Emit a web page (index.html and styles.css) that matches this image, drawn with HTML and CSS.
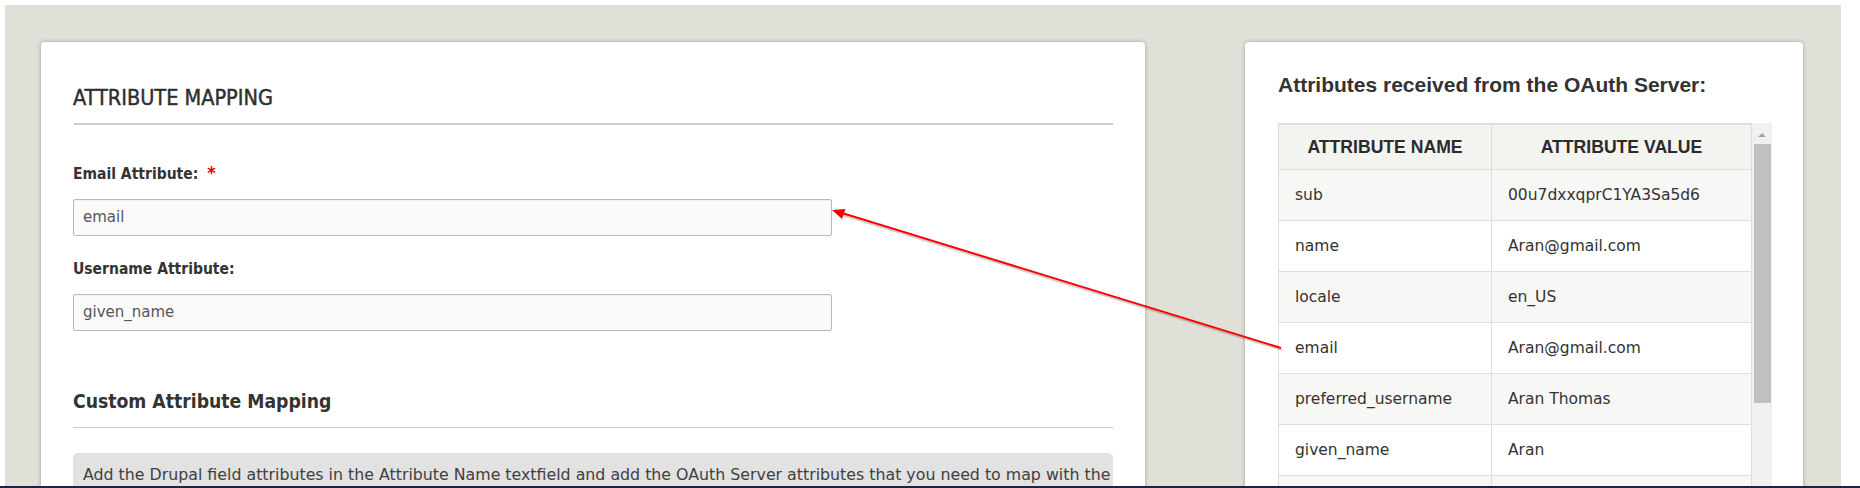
FILE: index.html
```html
<!DOCTYPE html>
<html lang="en">
<head>
<meta charset="utf-8">
<title>Attribute Mapping</title>
<link rel="stylesheet" href="styles.css">
</head>
<body>
<div class="page">
  <div class="bg">
    <section class="card card-left">
      <h2 class="section-title">ATTRIBUTE MAPPING</h2>
      <hr class="rule-thick">
      <label class="field-label">Email Attribute: <span class="req">*</span></label>
      <div class="input">email</div>
      <label class="field-label field-label-2">Username Attribute:</label>
      <div class="input">given_name</div>
      <h3 class="sub-title">Custom Attribute Mapping</h3>
      <hr class="rule-thin">
      <div class="note">Add the Drupal field attributes in the Attribute Name textfield and add the OAuth Server attributes that you need to map with the<br>drupal attributes in the OAuth Server Attribute Name textfield.</div>
    </section>
    <section class="card card-right">
      <h3 class="attr-title">Attributes received from the OAuth Server:</h3>
      <div class="table-wrap">
        <table class="attr-table">
          <thead>
            <tr><th class="c1">ATTRIBUTE NAME</th><th class="c2">ATTRIBUTE VALUE</th></tr>
          </thead>
          <tbody>
            <tr class="odd"><td>sub</td><td>00u7dxxqprC1YA3Sa5d6</td></tr>
            <tr><td>name</td><td>Aran@gmail.com</td></tr>
            <tr class="odd"><td>locale</td><td>en_US</td></tr>
            <tr><td>email</td><td>Aran@gmail.com</td></tr>
            <tr class="odd"><td>preferred_username</td><td>Aran Thomas</td></tr>
            <tr><td>given_name</td><td>Aran</td></tr>
            <tr class="odd"><td>family_name</td><td>Thomas</td></tr>
          </tbody>
        </table>
        <div class="scrollbar">
          <div class="sb-arrow"></div>
          <div class="sb-thumb"></div>
        </div>
      </div>
    </section>
  </div>
  <svg class="annot" width="1860" height="488" viewBox="0 0 1860 488">
    <line x1="1282" y1="350" x2="842" y2="215" stroke="rgba(0,0,0,0.18)" stroke-width="2"/>
    <line x1="1281" y1="348" x2="842" y2="213" stroke="#ff0000" stroke-width="2"/>
    <polygon points="832,210 845.5,209 842,219" fill="#ff0000"/>
  </svg>
</div>
<div class="taskbar"></div>
</body>
</html>
```

FILE: styles.css
```css
html, body {
  margin: 0;
  padding: 0;
  background: #ffffff;
}

body {
  width: 1860px;
  height: 488px;
  overflow: hidden;
  font-family: "DejaVu Sans", "Liberation Sans", sans-serif;
  color: #333333;
}

.page {
  position: relative;
  height: 486px;
  padding: 5px 19px 0 5px;
  box-sizing: border-box;
  overflow: hidden;
}

.bg {
  height: 100%;
  background: #e0dfd8;
  display: flex;
  gap: 100px;
  padding: 37px 38px 0 36px;
  box-sizing: border-box;
  overflow: hidden;
  align-items: flex-start;
}

.card {
  background: #ffffff;
  border-radius: 4px;
  box-shadow: 0 0 4px rgba(0, 0, 0, 0.28);
  height: 600px;
  box-sizing: border-box;
  flex: none;
}

.card-left {
  width: 1104px;
  padding: 43px 32px 0 32px;
  display: flex;
  flex-direction: column;
}

.section-title {
  margin: 0;
  font-family: "DejaVu Sans Condensed", "DejaVu Sans", sans-serif;
  font-stretch: semi-condensed;
  font-size: 21.5px;
  line-height: 26px;
  font-weight: normal;
  color: #2f2f2f;
  -webkit-text-stroke: 0.45px #2f2f2f;
}

.rule-thick {
  margin: 12px 0 0 1px;
  border: 0;
  height: 2px;
  background: #cccccc;
}

.field-label {
  display: block;
  margin-top: 37px;
  font-family: "DejaVu Sans Condensed", "DejaVu Sans", sans-serif;
  font-stretch: semi-condensed;
  font-size: 15.5px;
  line-height: 22px;
  font-weight: bold;
  color: #333333;
}

.field-label-2 {
  margin-top: 22px;
}

.req {
  color: #e00000;
  margin-left: 4px;
  font-size: 18px;
}

.input {
  margin-top: 14px;
  width: 759px;
  height: 37px;
  box-sizing: border-box;
  border: 1px solid #b9b9b6;
  border-radius: 2px;
  background: #fafaf8;
  padding: 0 9px;
  font-size: 15px;
  line-height: 35px;
  color: #565656;
  box-shadow: inset 0 1px 1px rgba(0, 0, 0, 0.04);
}

.sub-title {
  margin: 59px 0 0 0;
  font-family: "DejaVu Sans Condensed", "DejaVu Sans", sans-serif;
  font-stretch: semi-condensed;
  font-size: 19.2px;
  line-height: 24px;
  font-weight: bold;
  color: #333333;
}

.rule-thin {
  margin: 13px 0 0 0;
  border: 0;
  height: 1px;
  background: #cccccc;
}

.note {
  margin-top: 25px;
  background: #e2e2e2;
  border-radius: 5px;
  padding: 11px 10px;
  font-size: 15.8px;
  line-height: 22px;
  color: #404040;
  white-space: nowrap;
}

.card-right {
  width: 558px;
  padding: 31px 31px 0 33px;
}

.attr-title {
  margin: 0;
  font-family: "Liberation Sans", Arial, sans-serif;
  font-size: 21px;
  line-height: 24px;
  font-weight: bold;
  color: #333333;
}

.table-wrap {
  margin-top: 26px;
  display: flex;
  align-items: stretch;
  height: 420px;
}

.attr-table {
  width: 474px;
  border-collapse: collapse;
  border-top: 2px solid #dddddd;
  align-self: flex-start;
  table-layout: fixed;
}

.attr-table th,
.attr-table td {
  border: 1px solid #dddddd;
  padding: 0 16px;
}

.attr-table th {
  height: 44px;
  background: #f3f3ef;
  font-family: "Liberation Sans", Arial, sans-serif;
  font-weight: bold;
  font-size: 17.6px;
  color: #2b2b2b;
  text-align: center;
  border-top: 0;
}

.attr-table .c1 {
  width: 213px;
  box-sizing: border-box;
}

.attr-table td {
  height: 50px;
  font-size: 15.5px;
  color: #333333;
  text-align: left;
}

.attr-table tbody tr {
  background: #ffffff;
}

.attr-table tbody tr.odd {
  background: #f7f7f6;
}

.scrollbar {
  width: 20px;
  background: #f1f1f1;
  display: flex;
  flex-direction: column;
  align-items: center;
}

.sb-arrow {
  margin-top: 10px;
  width: 0;
  height: 0;
  border-left: 4px solid transparent;
  border-right: 4px solid transparent;
  border-bottom: 4px solid #a3a3a3;
}

.sb-thumb {
  margin-top: 7px;
  width: 17px;
  height: 259px;
  background: #c1c1c1;
}

.annot {
  position: absolute;
  left: 0;
  top: 0;
  pointer-events: none;
}

.taskbar {
  height: 2px;
  background: #1b2540;
}
```
